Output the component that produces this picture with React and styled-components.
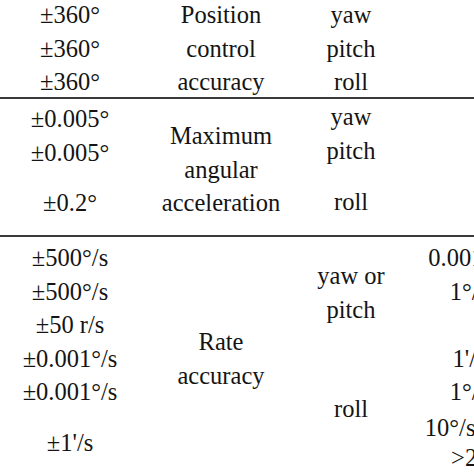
import React from "react";
import styled, { createGlobalStyle } from "styled-components";

const SERIF = '"Liberation Serif", "Times New Roman", Tinos, serif';

const GlobalStyle = createGlobalStyle`
  html, body {
    margin: 0;
    padding: 0;
    background: #ffffff;
    font-family: ${SERIF};
  }
`;

const Page = styled.div`
  width: 474px;
  height: 474px;
  overflow: hidden;
  background: #ffffff;
  color: #141414;
  font-family: ${SERIF};
  font-size: 24.5px;
`;

const Section = styled.div`
  display: grid;
  grid-template-columns: 140px 162px 98px 138px;
  width: 538px;
  height: ${(p) => p.$height}px;
`;

const Rule = styled.div`
  width: 538px;
  height: 2px;
  background: #3a3a3a;
`;

const Cell = styled.div`
  display: flex;
  flex-direction: column;
  align-items: center;
  padding-top: ${(p) => p.$pad || 0}px;
`;

const Line = styled.div`
  font-family: ${SERIF};
  line-height: 33.6px;
  height: 33.6px;
  white-space: nowrap;
  margin-top: ${(p) => p.$gap || 0}px;
`;

const sections = [
  {
    height: 97,
    cells: [
      { pad: 0, lines: [["±360°", -2], ["±360°"], ["±360°"]] },
      { pad: 0, lines: [["Position", -2], ["control"], ["accuracy"]] },
      { pad: 0, lines: [["yaw", -2], ["pitch"], ["roll"]] },
      { pad: 0, lines: [] },
    ],
  },
  {
    height: 136,
    cells: [
      { pad: 3, lines: [["±0.005°"], ["±0.005°"], ["±0.2°", 17]] },
      { pad: 20, lines: [["Maximum"], ["angular"], ["acceleration"]] },
      { pad: 1, lines: [["yaw"], ["pitch"], ["roll", 18]] },
      { pad: 0, lines: [] },
    ],
  },
  {
    height: 240,
    cells: [
      {
        pad: 4,
        lines: [
          ["±500°/s"],
          ["±500°/s"],
          ["±50 r/s"],
          ["±0.001°/s"],
          ["±0.001°/s"],
          ["±1'/s", 17],
        ],
      },
      { pad: 88, lines: [["Rate"], ["accuracy"]] },
      { pad: 22, lines: [["yaw or"], ["pitch"], ["roll", 66]] },
      {
        pad: 4,
        lines: [
          ["0.001°/s"],
          ["1°/s"],
          ["1'/s", 33.6],
          ["1°/s"],
          ["10°/s~20", 2],
          [">2°", -3.6],
        ],
      },
    ],
  },
];

export default function App() {
  return (
    <>
      <GlobalStyle />
      <Page>
        {sections.map((section, si) => (
          <React.Fragment key={si}>
            {si > 0 && <Rule />}
            <Section $height={section.height}>
              {section.cells.map((cell, ci) => (
                <Cell key={ci} $pad={cell.pad}>
                  {cell.lines.map(([text, gap], li) => (
                    <Line key={li} $gap={gap}>
                      {text}
                    </Line>
                  ))}
                </Cell>
              ))}
            </Section>
          </React.Fragment>
        ))}
      </Page>
    </>
  );
}
